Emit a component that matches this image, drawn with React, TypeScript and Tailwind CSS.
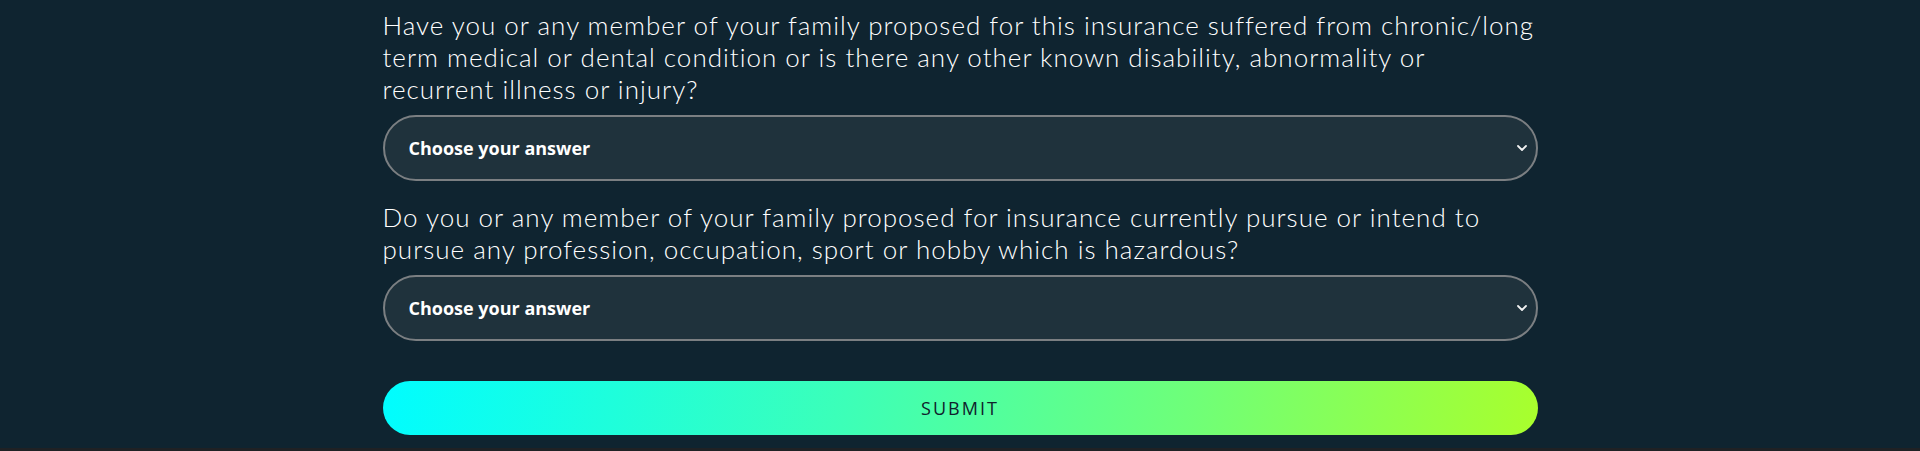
import React from 'react';

const QUESTIONS = [
    'Have you or any member of your family proposed for this insurance suffered from chronic/long term medical or dental condition or is there any other known disability, abnormality or recurrent illness or injury?',
    'Do you or any member of your family proposed for insurance currently pursue or intend to pursue any profession, occupation, sport or hobby which is hazardous?',
];

function AnswerSelect() {
    return (
        <div className="relative mt-[10px] h-[66px]">
            <select
                defaultValue=""
                className="w-full h-full appearance-none rounded-full border-2 border-[#7b7f82] bg-[#1f323c] pl-[24px] pr-12 text-[18px] font-bold text-white outline-none font-['Open_Sans',sans-serif]"
            >
                <option value="" disabled>Choose your answer</option>
                <option value="yes">Yes</option>
                <option value="no">No</option>
            </select>
            <svg
                className="pointer-events-none absolute right-[10px] top-1/2 -translate-y-1/2"
                width="12"
                height="8"
                viewBox="0 0 12 8"
                fill="none"
            >
                <path d="M2 2l4 4 4-4" stroke="#f2f2f2" strokeWidth="1.8" strokeLinecap="round" strokeLinejoin="round" />
            </svg>
        </div>
    );
}

export default function App() {
    return (
        <div className="w-full h-[451px] bg-[#0f2430] flex flex-col">
            <form className="w-[1155px] mx-auto pt-[9px] flex-1" onSubmit={(e) => e.preventDefault()}>
                {QUESTIONS.map((q, i) => (
                    <div key={i} className={i > 0 ? 'mt-[20px]' : ''}>
                        <p className="text-[26px] leading-[32px] tracking-[1px] font-light text-white font-['Lato',sans-serif]">{q}</p>
                        <AnswerSelect />
                    </div>
                ))}

                <button
                    type="submit"
                    className="mt-[40px] w-full h-[54px] rounded-full bg-[linear-gradient(100deg,#00fdff_0%,#3cffb8_40%,#6fff78_70%,#a9ff2c_100%)] text-[18px] tracking-[2px] text-[#10222c] font-['Open_Sans',sans-serif]"
                >
                    SUBMIT
                </button>
            </form>
            <div className="h-[3px] bg-[#1f2124]" />
        </div>
    );
}
